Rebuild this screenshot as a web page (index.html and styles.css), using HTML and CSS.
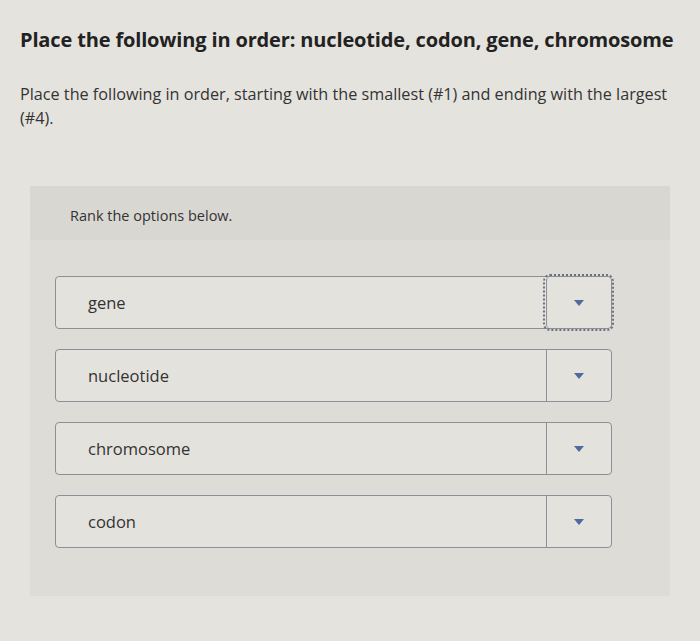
FILE: index.html
```html
<!DOCTYPE html>
<html lang="en">
<head>
  <meta charset="UTF-8">
  <meta name="viewport" content="width=device-width, initial-scale=1.0">
  <title>Ranking Question</title>
  <link rel="stylesheet" href="styles.css">
</head>
<body>
  <h1 class="title">Place the following in order: nucleotide, codon, gene, chromosome</h1>
  <p class="prompt">Place the following in order, starting with the smallest (#1) and ending with the largest (#4).</p>

  <div class="rank-panel">
    <div class="rank-head">Rank the options below.</div>
    <div class="rank-list">
      <div class="rank-item focused">
        <span class="rank-label">gene</span>
        <span class="rank-toggle"><span class="caret"></span></span>
      </div>
      <div class="rank-item">
        <span class="rank-label">nucleotide</span>
        <span class="rank-toggle"><span class="caret"></span></span>
      </div>
      <div class="rank-item">
        <span class="rank-label">chromosome</span>
        <span class="rank-toggle"><span class="caret"></span></span>
      </div>
      <div class="rank-item">
        <span class="rank-label">codon</span>
        <span class="rank-toggle"><span class="caret"></span></span>
      </div>
    </div>
  </div>
</body>
</html>
```

FILE: styles.css
```css
body {
  margin: 0;
  padding: 27px 20px 0 20px;
  background-color: #e5e3de;
  font-family: "Open Sans", Lato, sans-serif;
  color: #2b2b2b;
}
.title {
  margin: 0;
  font-size: 20px;
  line-height: 26px;
  font-weight: bold;
  color: #222;
  letter-spacing: -0.15px;
  white-space: nowrap;
}
.prompt {
  margin: 29px 0 0 0;
  font-size: 16.2px;
  line-height: 24px;
  color: #333;
}
.rank-panel {
  margin: 56px 10px 0 10px;
  background-color: #dedcd7;
  height: 410px;
}
.rank-head {
  padding: 20px 40px 0 40px;
  height: 54px;
  box-sizing: border-box;
  font-size: 14.5px;
  color: #333;
  background-color: #d9d7d2;
}
.rank-list {
  display: flex;
  flex-direction: column;
  gap: 20px;
  padding: 36px 58px 0 25px;
}
.rank-item {
  display: flex;
  height: 53px;
  border: 1.5px solid #8d8f97;
  border-radius: 4px;
  background-color: #e4e2dd;
  box-sizing: border-box;
}
.rank-label {
  flex: 1;
  display: flex;
  align-items: center;
  padding-left: 32px;
  font-size: 16.5px;
  color: #333;
}
.rank-toggle {
  width: 64px;
  border-left: 1.5px solid #8d8f97;
  display: flex;
  align-items: center;
  justify-content: center;
}
.caret {
  width: 0;
  height: 0;
  border-left: 5px solid transparent;
  border-right: 5px solid transparent;
  border-top: 6px solid #4d6c9c;
}
.focused .rank-toggle {
  outline: 2px dotted #6c7180;
  outline-offset: 1px;
  border-radius: 4px;
}
```
